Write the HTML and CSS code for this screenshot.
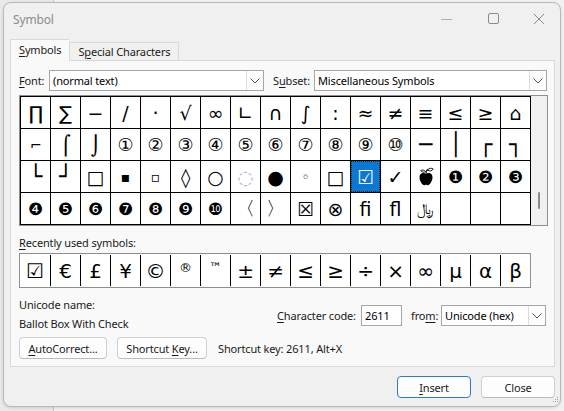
FILE: index.html
```html
<!DOCTYPE html>
<html lang="en">
<head>
    <meta charset="UTF-8">
    <title>Symbol</title>
    <link rel="stylesheet" href="styles.css">
</head>
<body>

<div class="window">
    <div class="titlebar">
        <span class="title">Symbol</span>
        <div class="controls">
            <svg width="46" height="32" viewBox="0 0 46 32"><path d="M19 16.5h11" stroke="#b0b0b0" stroke-width="1"/></svg>
            <svg width="46" height="32" viewBox="0 0 46 32"><rect x="20.5" y="10.5" width="10" height="10" rx="1.5" fill="none" stroke="#8a8a8a"/></svg>
            <svg width="46" height="32" viewBox="0 0 46 32"><path d="M20 11l10 10M30 11l-10 10" stroke="#8a8a8a" stroke-width="1"/></svg>
        </div>
    </div>

    <div class="content">
        <div class="tabs">
            <div class="tab active"><u>S</u>ymbols</div>
            <div class="tab">S<u>p</u>ecial Characters</div>
        </div>

        <div class="panel">
            <div class="font-row">
                <span class="lbl font-lbl"><u>F</u>ont:</span>
                <div class="select font-select">
                    <span class="select-value">(normal text)</span>
                    <span class="select-btn"><svg width="10" height="6" viewBox="0 0 10 6"><path d="M0.5 0.5l4.5 4.5l4.5-4.5" fill="none" stroke="#555"/></svg></span>
                </div>
                <span class="lbl subset-lbl">S<u>u</u>bset:</span>
                <div class="select subset-select">
                    <span class="select-value">Miscellaneous Symbols</span>
                    <span class="select-btn"><svg width="10" height="6" viewBox="0 0 10 6"><path d="M0.5 0.5l4.5 4.5l4.5-4.5" fill="none" stroke="#555"/></svg></span>
                </div>
            </div>

            <div class="charmap">
                <div class="cells">
                    <span>∏</span><span>∑</span><span>−</span><span>/</span><span>·</span><span>√</span><span>∞</span><span>∟</span><span>∩</span><span>∫</span><span>:</span><span>≈</span><span>≠</span><span>≡</span><span>≤</span><span>≥</span><span>⌂</span>
                    <span class="small">⌐</span><span>⌠</span><span>⌡</span><span class="circ">①</span><span class="circ">②</span><span class="circ">③</span><span class="circ">④</span><span class="circ">⑤</span><span class="circ">⑥</span><span class="circ">⑦</span><span class="circ">⑧</span><span class="circ">⑨</span><span class="circ">⑩</span><span class="box">─</span><span class="box">│</span><span class="box">┌</span><span class="box">┐</span>
                    <span class="box">└</span><span class="box">┘</span><span>□</span><span class="small">▪</span><span class="small">▫</span><span>◊</span><span>○</span><span class="dotted">◌</span><span>●</span><span class="small">◦</span><span>□</span><span class="selected">☑</span><span>✓</span>
                    <span><svg width="18" height="20" viewBox="0 0 18 20"><path d="M9 7c-2-1.6-6.5-1.4-6.5 3.3c0 4 3 8 4.6 8c0.9 0 1.2-0.5 1.9-0.5s1 0.5 1.9 0.5c1.6 0 4.6-4 4.6-8c0-4.7-4.5-4.9-6.5-3.3z" fill="#000"/><path d="M9 7.2c0-2 0.4-3.6 1.6-5" fill="none" stroke="#000" stroke-width="1.2"/><path d="M10.4 3.2c1.2-2.2 4.2-2.4 5.8-1.2c-1 1.8-3.6 2.6-5.8 1.2z" fill="none" stroke="#000" stroke-width="0.9"/><path d="M8.6 4.6c-1.2-1.8-3.6-2-5-1c0.8 1.4 3 2.2 5 1z" fill="none" stroke="#000" stroke-width="0.9"/></svg></span>
                    <span class="neg">❶</span><span class="neg">❷</span><span class="neg">❸</span>
                    <span class="neg">❹</span><span class="neg">❺</span><span class="neg">❻</span><span class="neg">❼</span><span class="neg">❽</span><span class="neg">❾</span><span class="neg">❿</span><span>〈</span><span>〉</span><span>☒</span><span>⊗</span><span>ﬁ</span><span>ﬂ</span><span class="rial">﷼</span><span></span><span></span><span></span>
                </div>
                <div class="scrollbar"><span class="thumb"></span></div>
            </div>

            <div class="recent-lbl"><u>R</u>ecently used symbols:</div>
            <div class="recent">
                <span>☑</span><span>€</span><span>£</span><span>¥</span><span>©</span><span class="sup">®</span><span class="sup">™</span><span>±</span><span>≠</span><span>≤</span><span>≥</span><span>÷</span><span>×</span><span>∞</span><span>µ</span><span>α</span><span>β</span>
            </div>

            <div class="info">
                <div class="info-left">
                    <div>Unicode name:</div>
                    <div>Ballot Box With Check</div>
                </div>
                <div class="info-right">
                    <span class="code-lbl"><u>C</u>haracter code:</span>
                    <div class="input">2611</div>
                    <span class="from-lbl">fro<u>m</u>:</span>
                    <div class="select from-select">
                        <span class="select-value">Unicode (hex)</span>
                        <span class="select-btn"><svg width="10" height="6" viewBox="0 0 10 6"><path d="M0.5 0.5l4.5 4.5l4.5-4.5" fill="none" stroke="#555"/></svg></span>
                    </div>
                </div>
            </div>

            <div class="btn-row">
                <button class="btn autocorrect"><u>A</u>utoCorrect...</button>
                <button class="btn shortcut">Shortcut <u>K</u>ey...</button>
                <span class="shortcut-text">Shortcut key: 2611, Alt+X</span>
            </div>
        </div>

        <div class="footer">
            <button class="btn dialog-btn default"><u>I</u>nsert</button>
            <button class="btn dialog-btn">Close</button>
        </div>
    </div>

    <svg class="grip" width="8" height="8" viewBox="0 0 8 8"><g fill="#a0a0a0"><rect x="6" y="0" width="1" height="1"/><rect x="4" y="2" width="1" height="1"/><rect x="6" y="2" width="1" height="1"/><rect x="2" y="4" width="1" height="1"/><rect x="4" y="4" width="1" height="1"/><rect x="6" y="4" width="1" height="1"/></g></svg>
</div>

</body>
</html>
```

FILE: styles.css
```css
*{
    padding: 0;
    margin: 0;
    box-sizing: border-box;
}

body{
    width: 564px;
    height: 411px;
    overflow: hidden;
    background: linear-gradient(to right, #e9e9e9 53px, #c4c4c4 53px, #c4c4c4 54px, #f1f1f1 54px);
    font-family: "Noto Sans", "DejaVu Sans", sans-serif;
    font-size: 11px;
    letter-spacing: -0.15px;
    color: #1a1a1a;
}

u{
    text-decoration: underline;
    text-underline-offset: 2px;
}

.window{
    position: relative;
    width: 558px;
    height: 405px;
    margin: 2px 0 0 3px;
    background-color: #f0f0f0;
    border: 1px solid #b9b9b9;
    border-radius: 8px;
    box-shadow: 0 1px 3px rgba(0, 0, 0, 0.12);
}

.titlebar{
    display: flex;
    justify-content: space-between;
    align-items: center;
    height: 32px;
    padding-left: 9px;
}

.title{
    color: #8c8c8c;
    font-size: 12px;
}

.controls{
    display: flex;
}

.controls svg{
    display: block;
}

.content{
    padding: 4px 5px 0 6px;
}

/* tabs */
.tabs{
    display: flex;
    align-items: flex-end;
    height: 21px;
}

.tab{
    height: 18px;
    padding: 0 8px;
    line-height: 17px;
    border: 1px solid #d9d9d9;
    border-bottom: none;
    background-color: #f0f0f0;
}

.tab.active{
    position: relative;
    z-index: 1;
    height: 22px;
    margin-bottom: -1px;
    padding: 0 8px;
    line-height: 20px;
    background-color: #f9f9f9;
    border-right: none;
}

.panel{
    display: flex;
    flex-direction: column;
    height: 307px;
    padding: 9px 6px 0 8px;
    background-color: #f9f9f9;
    border: 1px solid #d9d9d9;
}

/* selects */
.font-row{
    display: flex;
    align-items: center;
    height: 21px;
}

.lbl{
    flex-shrink: 0;
}

.font-lbl{
    width: 30px;
}

.subset-lbl{
    width: 41px;
    margin-left: 9px;
}

.select{
    display: flex;
    flex-shrink: 0;
    height: 21px;
    background-color: #fff;
    border: 1px solid #a6a6a6;
}

.select-value{
    flex: 1;
    padding-left: 3px;
    line-height: 19px;
    color: #000;
    white-space: nowrap;
}

.select-btn{
    display: flex;
    align-items: center;
    justify-content: center;
    width: 17px;
    background-color: #fdfdfd;
    border-left: 1px solid #dcdcdc;
}

.font-select{
    width: 215px;
}

.subset-select{
    width: 233px;
}

/* character grid */
.charmap{
    display: flex;
    width: 529px;
    margin-top: 4px;
    border: 1px solid #8f8f8f;
}

.cells{
    display: grid;
    grid-template-columns: repeat(17, 29px);
    grid-auto-rows: 31px;
    gap: 1px;
    background-color: #000;
    border: 1px solid #000;
}

.cells span{
    display: flex;
    align-items: center;
    justify-content: center;
    background-color: #fff;
    font-family: "DejaVu Sans", sans-serif;
    font-size: 19px;
    color: #000;
    overflow: hidden;
}

.cells .box{
    font-size: 22px;
}

.cells .circ{
    font-size: 18px;
}

.cells .small{
    font-size: 14px;
}

.cells .neg{
    font-size: 17px;
}

.cells .dotted{
    color: #a9b7d8;
}

.cells .rial{
    font-size: 15px;
}

.cells .selected{
    background-color: #0a78d4;
    color: #fff;
    outline: 1px dotted #3a2a10;
    outline-offset: -1px;
}

.scrollbar{
    position: relative;
    width: 16px;
    background-color: #f0f0f0;
}

.thumb{
    position: absolute;
    left: 7px;
    top: 96px;
    width: 2px;
    height: 17px;
    background-color: #8a8a8a;
    border-radius: 1px;
}

/* recently used */
.recent-lbl{
    margin-top: 8px;
    height: 17px;
    line-height: 17px;
}

.recent{
    display: flex;
    width: 512px;
    height: 35px;
    margin-top: 2px;
    padding: 1px 0;
    background-color: #fff;
    border: 1px solid #8f8f8f;
}

.recent span{
    display: flex;
    align-items: center;
    justify-content: center;
    width: 30px;
    font-family: "DejaVu Sans", sans-serif;
    font-size: 20px;
    color: #000;
    border-left: 1px solid #000;
}

.recent span:first-child{
    border-left: none;
}

.recent .sup{
    align-items: flex-start;
    padding-top: 5px;
    font-size: 13px;
}

/* info */
.info{
    display: flex;
    height: 36px;
    margin-top: 9px;
    white-space: nowrap;
}

.info-left{
    display: flex;
    flex-direction: column;
    flex-shrink: 0;
    gap: 3px;
    width: 258px;
    line-height: 16px;
}

.info-right{
    display: flex;
    align-items: center;
    height: 21px;
    margin-top: 8px;
}

.code-lbl{
    width: 84px;
    flex-shrink: 0;
}

.input{
    flex-shrink: 0;
    width: 41px;
    height: 21px;
    padding-left: 3px;
    line-height: 19px;
    color: #000;
    background-color: #fff;
    border: 1px solid #a6a6a6;
}

.from-lbl{
    flex-shrink: 0;
    width: 30px;
    margin-left: 9px;
}

.from-select{
    width: 105px;
}

/* buttons */
.btn-row{
    display: flex;
    align-items: center;
    margin-top: 4px;
    white-space: nowrap;
}

.btn{
    height: 22px;
    font-family: inherit;
    font-size: inherit;
    letter-spacing: inherit;
    color: #1a1a1a;
    background-color: #fdfdfd;
    border: 1px solid #d0d0d0;
    border-bottom-color: #bcbcbc;
    border-radius: 4px;
}

.autocorrect{
    width: 88px;
}

.shortcut{
    width: 90px;
    margin-left: 10px;
}

.shortcut-text{
    margin-left: 11px;
}

.footer{
    display: flex;
    justify-content: flex-end;
    gap: 10px;
    margin-top: 9px;
}

.dialog-btn{
    width: 74px;
}

.dialog-btn.default{
    border: 1px solid #2a7ad0;
}

.grip{
    position: absolute;
    right: 1px;
    bottom: 1px;
}
```
